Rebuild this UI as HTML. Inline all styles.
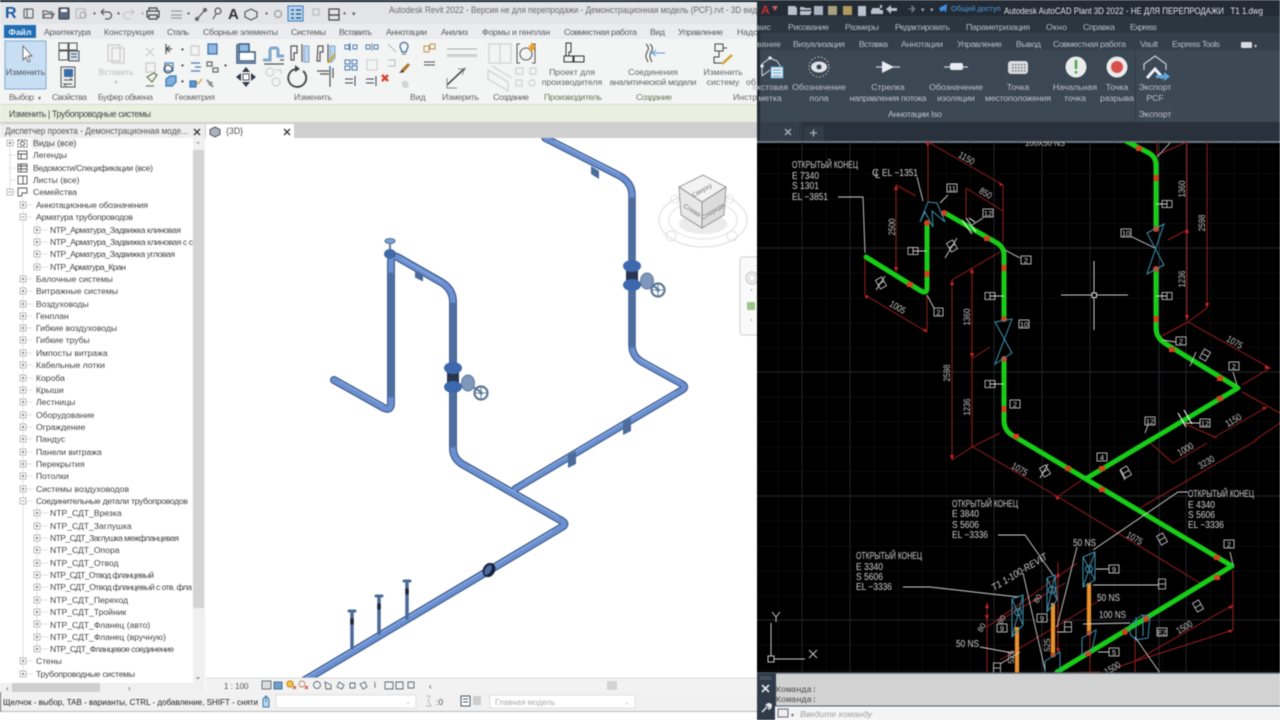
<!DOCTYPE html>
<html lang="ru"><head><meta charset="utf-8"><title>Revit и AutoCAD Plant 3D</title>
<style>
html,body{margin:0;padding:0;background:#fff;width:1280px;height:720px;overflow:hidden}
svg{display:block;filter:blur(.4px)}
text{font-family:"Liberation Sans",sans-serif;font-size:8.7px;fill:#555}
.t{fill:#444;font-size:8.6px}
.tab{fill:#5c5c5c;font-size:8.7px}
.lb{fill:#666;font-size:8.7px}
.d{fill:#b5bcc4;font-size:8.7px}
.r{fill:#bcc3cb;font-size:8.7px}
.c{fill:#cfcfcf;font-size:9.8px}
.m{text-anchor:middle}
.dim{fill:#c4c4c4;font-size:9.6px;text-anchor:middle}
.tg{fill:#ddd;font-size:7.5px;text-anchor:middle}
</style></head><body>
<svg width="1280" height="720" viewBox="0 0 1280 720" xmlns="http://www.w3.org/2000/svg">
<defs>
<clipPath id="cv"><rect x="206" y="138" width="551" height="541"/></clipPath>
<clipPath id="cd"><rect x="757" y="142" width="523" height="531"/></clipPath>
<pattern id="g1" width="24" height="24.8" patternUnits="userSpaceOnUse" x="10" y="25"><path d="M0 0H24M0 0V24.8" stroke="#131316" stroke-width="1" fill="none"/></pattern>
<g id="b"><rect x="-3.5" y="-5" width="7" height="10" fill="none" stroke="#d0d0d0" stroke-width=".8"/><path d="M-3.5 0H3.5" stroke="#d0d0d0" stroke-width=".8"/></g>
<g id="wh"><circle r="6.500" fill="none" stroke="#5a7596" stroke-width="2.200"/><path d="M-6.500 0H6.500M0-6.500V6.500" stroke="#6d88a8" stroke-width="1.100"/><circle r="1.800" fill="#5c7a9c"/></g>
<g id="pl"><rect x="-3" y="-3" width="6" height="6" fill="#fff" stroke="#aaa" stroke-width=".8"/><path d="M-1.500 0h3M0-1.500v3" stroke="#667" stroke-width=".7"/></g>
<g id="mi"><rect x="-3" y="-3" width="6" height="6" fill="#fff" stroke="#aaa" stroke-width=".8"/><path d="M-1.500 0h3" stroke="#667" stroke-width=".7"/></g>
</defs>

<!-- REVIT BACKGROUND -->
<rect x="0" y="0" width="757" height="720" fill="#fff"/>
<rect x="0" y="0" width="757" height="2" fill="#16202c"/>
<rect x="0" y="2" width="757" height="22" fill="#e2e4e8"/>
<rect x="0" y="24" width="757" height="16" fill="#eaecef"/>
<rect x="0" y="39" width="757" height="66" fill="#f3f4f4"/>
<rect x="0" y="104" width="757" height="1" fill="#d8dcd0"/>
<rect x="0" y="105" width="757" height="17" fill="#e9f0df"/>
<rect x="0" y="122" width="757" height="16" fill="#cfcfcf"/>
<rect x="0" y="124" width="205" height="14" fill="#eeeeee"/>
<rect x="206" y="124" width="88" height="15" fill="#fff"/>

<!-- QAT -->
<text x="5" y="18" style="font-size:16px;font-weight:bold;fill:#1c5a9e">R</text>
<g fill="none" stroke="#666" stroke-width="1.200">
<rect x="24" y="9" width="9" height="9" rx="1"/><path d="M27 9v9"/>
<path d="M43 18v-7h4l1 1h4v6zM43 18l2-4h9l-2 4"/>
<rect x="59" y="8" width="10" height="11" rx="1" fill="#5a6a80" stroke="#445"/><rect x="61" y="9" width="6" height="3" fill="#fff" stroke="none"/>
<rect x="76" y="9" width="9" height="9" stroke="#bbb"/><circle cx="83" cy="15" r="3" stroke="#aaa"/>
<path d="M101 12h7a3 3 0 0 1 0 7h-3M101 12l3-3M101 12l3 3" stroke="#555"/>
<path d="M134 12h-7a3 3 0 0 0 0 7h3M134 12l-3-3M134 12l-3 3" stroke="#c5c5c5"/>
<path d="M149 11v-3h8v3M149 17h-2v-6h12v6h-2M149 15h8v4h-8z" stroke="#444"/>
<path d="M171 11h11M171 15h11M171 18h11" stroke="#999"/>
<path d="M197 19l8-9" stroke="#555"/><circle cx="197" cy="19" r="1.500" fill="#777"/><circle cx="205" cy="10" r="1.500" fill="#777"/>
<circle cx="218" cy="11" r="3" stroke="#555"/><path d="M216 14l-3 5" stroke="#555"/>
<path d="M251 9l6 3v5l-6 3-6-3v-5z" stroke="#555"/><circle cx="278" cy="14" r="3.500" stroke="#999"/>
<rect x="313" y="9" width="6" height="6" stroke="#bbb"/><rect x="329" y="9" width="10" height="6" stroke="#444"/><rect x="329" y="15" width="10" height="5" stroke="#444"/>
</g>
<text x="228" y="19" style="font-size:15px;font-weight:bold;fill:#333">A</text>
<rect x="288" y="6" width="15" height="15" fill="#b9d4ee" stroke="#3c7cbc"/>
<path d="M291 10h3M296 10h5M291 14h3M296 14h5M291 18h3M296 18h5" stroke="#1a4a80" stroke-width="1.200"/>
<text x="93" y="16" class="tab">•</text><text x="117" y="16" class="tab">•</text><text x="141" y="16" class="tab" style="fill:#aaa">•</text><text x="187" y="16" class="tab">•</text><text x="265" y="16" class="tab">•</text><text x="343" y="16" class="tab">•</text><text x="352" y="16" class="tab" style="font-size:7px">▾</text>
<text x="389" y="13" textLength="368" lengthAdjust="spacingAndGlyphs" style="font-size:9.400px;fill:#6a6a6a">Autodesk Revit 2022 - Версия не для перепродажи - Демонстрационная модель (PCF).rvt - 3D вид</text>

<!-- TABS -->
<rect x="4" y="25" width="32" height="13" fill="#1f6db3"/>
<text x="20" y="35" class="m" style="fill:#eaf2fa;font-size:8.700px;font-weight:bold">Файл</text>
<text x="44" y="35" class="tab" textLength="47">Архитектура</text>
<text x="104" y="35" class="tab" textLength="50">Конструкция</text>
<text x="167" y="35" class="tab" textLength="22">Сталь</text>
<text x="203" y="35" class="tab" textLength="75">Сборные элементы</text>
<text x="291" y="35" class="tab" textLength="35">Системы</text>
<text x="339" y="35" class="tab" textLength="33">Вставить</text>
<text x="386" y="35" class="tab" textLength="41">Аннотации</text>
<text x="441" y="35" class="tab" textLength="27">Анализ</text>
<text x="482" y="35" class="tab" textLength="68">Формы и генплан</text>
<text x="564" y="35" class="tab" textLength="73">Совместная работа</text>
<text x="650" y="35" class="tab" textLength="15">Вид</text>
<text x="678" y="35" class="tab" textLength="45">Управление</text>
<text x="737" y="35" class="tab">Надстройки</text>

<!-- Ribbon icons -->
<rect x="5" y="41" width="41" height="48" fill="#c8dff3" stroke="#7fabd2"/>
<path d="M23 46v14l3-3 2 5 2-1-2-5h4z" fill="#fff" stroke="#666" stroke-width=".9"/>
<text x="25.500" y="75" class="m" style="font-size:8.700px;fill:#4a5560">Изменить</text>
<g fill="none" stroke="#555" stroke-width="1">
<rect x="59" y="43" width="9" height="7"/><rect x="69" y="43" width="8" height="7"/><rect x="59" y="51" width="9" height="9"/><rect x="69" y="51" width="10" height="10" fill="#cfe0f0"/><path d="M71 54h6M71 57h6"/>
<rect x="61" y="67" width="14" height="20" fill="#eee"/><rect x="64" y="69" width="9" height="8" fill="#3a6ea8" stroke="none"/><path d="M64 80h8l-2-2M72 84h-8l2 2"/>
</g>
<g fill="none" stroke="#d0d0d0" stroke-width="1.400">
<rect x="108" y="45" width="12" height="16"/><rect x="112" y="48" width="12" height="15"/>
<path d="M146 48l8 8M154 48l-8 8"/><rect x="146" y="63" width="9" height="9"/>
<rect x="191" y="46" width="8" height="9"/>
</g>
<text x="116" y="75" class="m" style="fill:#bbb;font-size:8.200px">Вставить</text><text x="116" y="84" class="m" style="fill:#bbb;font-size:6px">▾</text>
<g fill="none" stroke="#555" stroke-width="1.200">
<path d="M166 44v10M170 46l-4 3 4 3M166 49h6"/>
<path d="M147 77l5 5 5-7-3-2z" stroke="#6a7a50"/><path d="M146 86h8" stroke="#777"/>
<rect x="165" y="63" width="8" height="8" stroke="#3a7fc0"/><circle cx="168" cy="69" r="4" stroke="#555"/>
<path d="M166 86v-7l4-3h6v6l-4 4z" fill="#7fb0de" stroke="#3a75b0"/>
<path d="M191 63h9M195 67h6M191 71h9" stroke="#4a7cb0"/>
<path d="M190 87l5-6 3 3 4-5" stroke="#c6a030"/><rect x="190" y="81" width="6" height="6" fill="#5f96cf" stroke="#3a75b0"/>
<path d="M207 80l6 7M209 85l3-3" stroke="#888" stroke-width="2"/>
<path d="M207 62h5v4h-5zM213 68h5v4h-5z" stroke="#666"/>
<rect x="208" y="44" width="9" height="10" fill="#8fb7df" stroke="#3a6ea8"/>
</g>
<text x="181" y="52" class="t">•</text><text x="181" y="68" class="t">•</text><text x="181" y="84" class="t">•</text><text x="224" y="68" class="t">•</text>
<g fill="none" stroke="#3a5a80" stroke-width="1.500">
<path d="M237 44v19h19"/><rect x="239" y="44" width="10" height="8" fill="#8fbce6"/><rect x="239" y="52" width="16" height="9" fill="#fff"/>
<path d="M263 60h7v-10a2 2 0 0 1 2-2h4a2 2 0 0 1 2 2v6h6" stroke="#7fa8cc" stroke-width="3"/>
<path d="M264 64h20M280 60h4" stroke="#555" stroke-width="1.200"/>
<path d="M291 46h6v7h-3v7h-3zM302 44v18" stroke="#555" stroke-width="1.200"/><path d="M304 46h5v16h-5z" fill="#bcd4ee" stroke="#7faad0" stroke-width="1"/>
<path d="M318 46h5v6h-3v9h-3zM328 44v18" stroke="#555" stroke-width="1.200"/><path d="M330 46h5v12l-3 4h-2z" fill="#bcd4ee" stroke="#7faad0" stroke-width="1"/>
<path d="M328 63l7-9" stroke="#c9a530" stroke-width="2"/>
</g>
<g fill="#2e3c4e"><path d="M246 67l4 5h-8zM246 87l4-5h-8zM236 77l5-4v8zM256 77l-5-4v8z"/></g><rect x="243" y="74" width="6" height="6" fill="#fff" stroke="#555"/>
<g fill="none" stroke="#d0d0d0" stroke-width="1.200"><circle cx="270" cy="72" r="4"/><circle cx="276" cy="82" r="4"/><path d="M276 70h5v4"/></g>
<path d="M296 69a9 9 0 1 0 7 2" fill="none" stroke="#444" stroke-width="1.800"/><path d="M295 65l5 4-5 3z" fill="#444"/>
<path d="M317 71h12M320 74h9M330 71v16M333 68v10" fill="none" stroke="#555" stroke-width="1.200"/><path d="M330 66v5" stroke="#3a7fc0" stroke-width="1.500"/>
<g fill="none" stroke="#4a7cb0" stroke-width="1"><rect x="345" y="45" width="4" height="4"/><rect x="353" y="45" width="4" height="4"/><path d="M350 43v8"/><rect x="366" y="45" width="4" height="4"/><rect x="374" y="45" width="4" height="4"/><path d="M372 43v8" stroke="#888"/>
<rect x="345" y="60" width="5" height="4"/><rect x="352" y="60" width="5" height="4"/><rect x="345" y="66" width="5" height="4"/><rect x="352" y="66" width="5" height="4"/>
<rect x="367" y="60" width="10" height="10" stroke="#ccc"/><path d="M388 44l8 8M388 60h7v6h-7" stroke="#bbb"/>
<path d="M345 79h8M345 83h8M355 76v10" stroke="#445"/><path d="M366 79h8M366 83h8M376 76v10" stroke="#445"/></g>
<path d="M382 75l6 6M388 75l-6 6" stroke="#d8402e" stroke-width="2.400"/>
<g fill="none" stroke="#3b6b9e" stroke-width="1.200"><path d="M401 49a4 4 0 1 1 6 0l-1 3h-4z"/><path d="M402 54h4" stroke="#888"/></g>
<path d="M401 70l7-7 2 2-7 8z" fill="#a8792d"/><path d="M399 73l3-3 2 2z" fill="#333"/>
<rect x="402" y="81" width="6" height="7" rx="2" fill="#d4d4d4" transform="rotate(-30 405 84)"/>
<g fill="none" stroke="#999" stroke-width="1"><rect x="424" y="46" width="5" height="6" stroke="#c09050"/><rect x="430" y="44" width="5" height="5" stroke="#c09050"/></g>
<path d="M424 62h11M424 65h11" stroke="#555"/>
<path d="M447 49h30" stroke="#aaa"/><rect x="447" y="54" width="30" height="3" fill="#d0d0d0"/>
<path d="M447 85l18-17" stroke="#333" stroke-width="1.400"/><path d="M447 78v10h10M465 68l-3 7M458 69h8" stroke="#888" fill="none"/>
<g fill="none" stroke="#d6d6d6" stroke-width="1.400"><rect x="489" y="44" width="22" height="19"/><path d="M500 44v19"/><path d="M488 70l20 12v9l-20-12zM492 66l20 12"/><rect x="516" y="68" width="7" height="6"/><rect x="530" y="68" width="6" height="6"/><rect x="516" y="80" width="6" height="6"/><circle cx="532" cy="83" r="3"/></g>
<path d="M520 44h-3v19h3M532 44h3v19h-3" stroke="#555" fill="none"/><circle cx="526" cy="54" r="6" fill="none" stroke="#555"/><path d="M531 42l2 3 3 1-2 2 1 3-3-1-3 1 1-3-2-2 3-1z" fill="#f0a020"/>
<g fill="none" stroke="#333" stroke-width="1"><path d="M566 43h5v9h-2v4h-3zM564 56h9v6h-9z"/><rect x="574" y="56" width="10" height="6"/></g>
<g fill="none" stroke="#444" stroke-width="1"><path d="M646 44c3 3 3 5 1 8-2 4-1 6 1 10M650 44c3 3 3 5 1 8-2 4-1 6 1 10"/></g><path d="M652 53h13M656 50l-4 3 4 3" stroke="#5b9bd5" fill="none"/>
<g fill="none" stroke="#444" stroke-width="1"><rect x="715" y="44" width="8" height="7"/><path d="M719 51v6h-5v6h8M723 48h4"/><path d="M722 64l10-9" stroke="#c9a530" stroke-width="2.500"/></g>
<text x="572" y="75" class="lb m">Проект для</text><text x="572" y="85" class="lb m">производителя</text>
<text x="653" y="75" class="lb m">Соединения</text><text x="653" y="85" class="lb m" textLength="87">аналитической модели</text>
<text x="723" y="75" class="lb m">Изменить</text><text x="723" y="85" class="lb m">систему</text><text x="746" y="85" class="lb">об</text>
<text x="9" y="100" class="lb" textLength="25">Выбор</text><text x="38" y="100" class="lb" style="font-size:6px">▾</text>
<text x="52" y="100" class="lb" textLength="35">Свойства</text><text x="98" y="100" class="lb" textLength="55">Буфер обмена</text><text x="175" y="100" class="lb" textLength="40">Геометрия</text><text x="294" y="100" class="lb" textLength="38">Изменить</text><text x="410" y="100" class="lb">Вид</text><text x="442" y="100" class="lb" textLength="37">Измерить</text><text x="493" y="100" class="lb" textLength="36">Создание</text><text x="544" y="100" class="lb" textLength="58" style="fill:#6a7a55">Производитель</text><text x="636" y="100" class="lb" textLength="36" style="fill:#6a7a55">Создание</text><text x="733" y="100" class="lb">Инстр</text>
<text x="9" y="117" style="font-size:8.800px;fill:#444" textLength="142">Изменить | Трубопроводные системы</text>

<!-- Browser -->
<text x="5" y="134" textLength="183" lengthAdjust="spacingAndGlyphs" style="font-size:8.800px;fill:#555">Диспетчер проекта - Демонстрационная моде...</text>
<path d="M194 129l6 6M200 129l-6 6M284 129l6 6M290 129l-6 6" stroke="#333" stroke-width="1.300"/>
<path d="M215 127l5 2.500v5l-5 2.500-5-2.500v-5z" fill="#aab2bc" stroke="#556"/>
<text x="226" y="134" style="font-size:8.800px;fill:#555">{3D}</text>
<rect x="193" y="138" width="12" height="545" fill="#f0f0f0"/><rect x="193" y="150" width="11" height="458" fill="#d4d4d4"/>
<text x="198" y="147" class="m" style="font-size:7px;fill:#666">⌃</text>
<rect x="0" y="683" width="205" height="10" fill="#f0f0f0"/><rect x="12" y="683" width="88" height="10" fill="#cfcfcf"/>
<text x="6" y="691" style="font-size:8px;fill:#555">‹</text><text x="128" y="691" style="font-size:8px;fill:#555">›</text><text x="198" y="679" class="m" style="font-size:8px;fill:#555">⌄</text>
<path d="M10 148V192M10 192V196M23 198V674M37 222V267M37 506V650M10 143h6M10 155h6M10 168h6M10 180h6M10 192h6M23 205h10M23 217h10M23 279h10M23 291h10M23 304h10M23 316h10M23 328h10M23 340h10M23 353h10M23 365h10M23 378h10M23 390h10M23 402h10M23 415h10M23 427h10M23 439h10M23 452h10M23 464h10M23 476h10M23 489h10M23 501h10M23 661h10M23 674h10M37 230h11M37 242h11M37 254h11M37 267h11M37 513h11M37 526h11M37 538h11M37 550h11M37 563h11M37 575h11M37 587h11M37 600h11M37 612h11M37 624h11M37 637h11M37 649h11" stroke="#c4c4c4" stroke-dasharray="1 1" fill="none"/>
<use href="#pl" x="10" y="143"/><use href="#mi" x="10" y="192"/>
<use href="#pl" x="23" y="205"/><use href="#mi" x="23" y="217"/><use href="#pl" x="23" y="279"/><use href="#pl" x="23" y="291"/><use href="#pl" x="23" y="304"/><use href="#pl" x="23" y="316"/><use href="#pl" x="23" y="328"/><use href="#pl" x="23" y="340"/><use href="#pl" x="23" y="353"/><use href="#pl" x="23" y="365"/><use href="#pl" x="23" y="378"/><use href="#pl" x="23" y="390"/><use href="#pl" x="23" y="402"/><use href="#pl" x="23" y="415"/><use href="#pl" x="23" y="427"/><use href="#pl" x="23" y="439"/><use href="#pl" x="23" y="452"/><use href="#pl" x="23" y="464"/><use href="#pl" x="23" y="476"/><use href="#pl" x="23" y="489"/><use href="#mi" x="23" y="501"/><use href="#pl" x="23" y="661"/><use href="#pl" x="23" y="674"/>
<use href="#pl" x="37" y="230"/><use href="#pl" x="37" y="242"/><use href="#pl" x="37" y="254"/><use href="#pl" x="37" y="267"/><use href="#pl" x="37" y="513"/><use href="#pl" x="37" y="526"/><use href="#pl" x="37" y="538"/><use href="#pl" x="37" y="550"/><use href="#pl" x="37" y="563"/><use href="#pl" x="37" y="575"/><use href="#pl" x="37" y="587"/><use href="#pl" x="37" y="600"/><use href="#pl" x="37" y="612"/><use href="#pl" x="37" y="624"/><use href="#pl" x="37" y="637"/><use href="#pl" x="37" y="649"/>
<g fill="#fff" stroke="#555" stroke-width=".9"><rect x="18" y="140" width="9" height="7" stroke-dasharray="2 1"/><circle cx="22.500" cy="143.500" r="2"/><rect x="18" y="151" width="9" height="8"/><path d="M18 154h9M21 154v5"/><rect x="18" y="164" width="9" height="8"/><path d="M18 166h9M18 169h9M21 164v8"/><rect x="18" y="176" width="9" height="8"/><path d="M23 176v8"/><path d="M18 196v-8h9v5h-5v3z"/></g>
<rect x="31" y="138" width="45" height="11" fill="#f2f2f2"/><text x="33" y="146" class="t">Виды (все)</text>
<text x="33" y="158" class="t">Легенды</text>
<text x="33" y="171" class="t" textLength="120">Ведомости/Спецификации (все)</text>
<text x="33" y="183" class="t">Листы (все)</text>
<text x="33" y="195" class="t">Семейства</text>
<text x="36" y="208" class="t" textLength="112">Аннотационные обозначения</text>
<text x="36" y="220" class="t" textLength="97">Арматура трубопроводов</text>
<text x="50" y="233" class="t" textLength="131">NTP_Арматура_Задвижка клиновая</text>
<text x="50" y="245" class="t" textLength="143">NTP_Арматура_Задвижка клиновая с с</text>
<text x="50" y="257" class="t" textLength="125">NTP_Арматура_Задвижка угловая</text>
<text x="50" y="270" class="t" textLength="76">NTP_Арматура_Кран</text>
<text x="36" y="282" class="t">Балочные системы</text>
<text x="36" y="294" class="t">Витражные системы</text>
<text x="36" y="307" class="t">Воздуховоды</text>
<text x="36" y="319" class="t">Генплан</text>
<text x="36" y="331" class="t">Гибкие воздуховоды</text>
<text x="36" y="343" class="t">Гибкие трубы</text>
<text x="36" y="356" class="t">Импосты витража</text>
<text x="36" y="368" class="t">Кабельные лотки</text>
<text x="36" y="381" class="t">Короба</text>
<text x="36" y="393" class="t">Крыши</text>
<text x="36" y="405" class="t">Лестницы</text>
<text x="36" y="418" class="t">Оборудование</text>
<text x="36" y="430" class="t">Ограждение</text>
<text x="36" y="442" class="t">Пандус</text>
<text x="36" y="455" class="t">Панели витража</text>
<text x="36" y="467" class="t">Перекрытия</text>
<text x="36" y="479" class="t">Потолки</text>
<text x="36" y="492" class="t">Системы воздуховодов</text>
<text x="36" y="504" class="t" textLength="152">Соединительные детали трубопроводов</text>
<text x="50" y="516" class="t">NTP_СДТ_Врезка</text>
<text x="50" y="529" class="t">NTP_СДТ_Заглушка</text>
<text x="50" y="541" class="t" textLength="129">NTP_СДТ_Заглушка межфланцевая</text>
<text x="50" y="553" class="t">NTP_СДТ_Опора</text>
<text x="50" y="566" class="t">NTP_СДТ_Отвод</text>
<text x="50" y="578" class="t" textLength="104">NTP_СДТ_Отвод фланцевый</text>
<text x="50" y="590" class="t" textLength="142">NTP_СДТ_Отвод фланцевый с отв. фла</text>
<text x="50" y="603" class="t">NTP_СДТ_Переход</text>
<text x="50" y="615" class="t">NTP_СДТ_Тройник</text>
<text x="50" y="628" class="t">NTP_СДТ_Фланец (авто)</text>
<text x="50" y="640" class="t">NTP_СДТ_Фланец (вручную)</text>
<text x="50" y="652" class="t" textLength="124">NTP_СДТ_Фланцевое соединение</text>
<text x="36" y="664" class="t">Стены</text>
<text x="36" y="677" class="t" textLength="99">Трубопроводные системы</text>

<!-- 3D VIEW -->
<g clip-path="url(#cv)" fill="none" stroke-linecap="round" stroke-linejoin="round">
<g stroke="#445f8c" stroke-width="8">
<path d="M334 380L384 408Q391 411 391 403V262Q391 253 399 258L441 282Q453 289 453 302V448Q453 458 462 464L562 521Q567 524 562 527L295 686"/>
<path d="M515 489L682 390Q687 387 682 384L642 362Q632 356 632 345V195Q632 183 620 176L545 138" stroke-width="7.500"/>
</g>
<g stroke="#6a90d2" stroke-width="5.500">
<path d="M334 380L384 408Q391 411 391 403V262Q391 253 399 258L441 282Q453 289 453 302V448Q453 458 462 464L562 521Q567 524 562 527L295 686"/>
<path d="M515 489L682 390Q687 387 682 384L642 362Q632 356 632 345V195Q632 183 620 176L545 138" stroke-width="5"/>
</g>
<path d="M391 275V395M453 305V445M632 200V345" stroke="#4d6f9f" stroke-width="5.500"/>
<path d="M340 381L383 405M402 259L442 282M470 466.500L558 516.500M552 531L305 678M525 481L675 392M620 174L555 141M640 359L680 381" stroke="#8fb0e6" stroke-width="1"/>
<path d="M407 583V618M379 598V633M352 613V648" stroke="#4a6a98" stroke-width="3.500"/>
<path d="M404 581h6M376 596h6M349 611h6" stroke="#4a6a98" stroke-width="3"/>
<path d="M407 590v3M379 605v3M352 620v3" stroke="#223" stroke-width="3.500"/>
</g>
<ellipse cx="390" cy="241" rx="5" ry="2.500" fill="#7ea3d4" stroke="#4a6c9c"/><path d="M390 243v9" stroke="#5d7ca6" stroke-width="2"/>
<ellipse cx="390" cy="254" rx="6" ry="5" fill="#3f6aa8"/>
<path d="M415 270l8 4.500v7l-8-4z" fill="#4a6a98"/><path d="M591 166l8 5v8l-8-5zM568 455l8-4v13l-8 4zM623 422l8-4v13l-8 4z" fill="#4b6c9c"/>
<ellipse cx="489" cy="570" rx="6" ry="7.500" fill="#15223c" transform="rotate(30 489 570)"/><ellipse cx="488" cy="570" rx="3" ry="5.500" fill="#506aa0" transform="rotate(30 488 570)"/>
<!-- valves -->
<g transform="translate(453 377)"><rect x="-6" y="-7" width="12" height="14" fill="#2a3550"/><ellipse cx="15" cy="6" rx="6.500" ry="8" fill="#7f97ba" stroke="#5f7a9c"/><path d="M20 10l8 5" stroke="#5d7a9a" stroke-width="2"/><ellipse cx="0" cy="-9" rx="9" ry="6" fill="#3d68ae"/><ellipse cx="0" cy="10" rx="9" ry="6" fill="#3d68ae"/></g><use href="#wh" x="481" y="393"/>
<g transform="translate(632 275)"><rect x="-6" y="-7" width="12" height="14" fill="#2a3550"/><ellipse cx="15" cy="6" rx="6.500" ry="8" fill="#7f97ba" stroke="#5f7a9c"/><path d="M20 10l6 4" stroke="#5d7a9a" stroke-width="2"/><ellipse cx="0" cy="-9" rx="9" ry="6" fill="#3d68ae"/><ellipse cx="0" cy="10" rx="9" ry="6" fill="#3d68ae"/></g><use href="#wh" x="658" y="290"/>
<!-- viewcube -->
<g fill="none" stroke="#e2e2e2"><ellipse cx="703" cy="220" rx="44" ry="27" stroke-width="1.300"/><ellipse cx="703" cy="220" rx="34" ry="19" stroke-width="1"/><circle cx="671" cy="236" r="5"/><circle cx="732" cy="236" r="5"/><circle cx="675" cy="199" r="4"/><circle cx="730" cy="199" r="4"/></g>
<ellipse cx="703" cy="224" rx="24" ry="10" fill="#ebebeb"/>
<path d="M703 175l23 12-24 15-23-15z" fill="#f3f3f3" stroke="#888" stroke-width=".8"/><path d="M679 187l23 15v26l-21-13z" fill="#e8e8e8" stroke="#888" stroke-width=".8"/><path d="M726 187l-24 15v26l22-13z" fill="#dcdcdc" stroke="#888" stroke-width=".8"/>
<text x="0" y="0" transform="translate(703 192) rotate(-30)" class="m" style="font-size:6.500px;fill:#777">Сверху</text>
<text x="0" y="0" transform="translate(691 212) rotate(32)" class="m" style="font-size:6.500px;fill:#777">Слева</text>
<text x="0" y="0" transform="translate(714 213) rotate(-32)" class="m" style="font-size:6.500px;fill:#777">Спереди</text>
<rect x="740" y="257" width="20" height="78" rx="3" fill="#fafafa" stroke="#cfcfcf"/>
<circle cx="752" cy="278" r="6" fill="none" stroke="#bbb"/><circle cx="752" cy="278" r="3.500" fill="none" stroke="#ccc"/><rect x="747" y="302" width="8" height="8" fill="#9cc68a"/><path d="M751 290h1M751 320h1" stroke="#888" stroke-width="1.500"/>

<!-- view control -->
<rect x="206" y="678" width="551" height="14" fill="#f2f2f2"/><path d="M206 678H757" stroke="#ddd"/>
<text x="224" y="689" style="font-size:8px;fill:#555">1 : 100</text>
<g fill="none" stroke="#5c6670" stroke-width=".9"><rect x="262" y="681" width="9" height="8" fill="#ddd"/><rect x="274" y="682" width="8" height="7" fill="#6fa0c8" stroke="#3a6a90"/><circle cx="290" cy="684" r="3.200" fill="#f0c040" stroke="#c08820"/><path d="M293 686l3 3M296 686l-3 3" stroke="#d04020"/><circle cx="302" cy="684" r="3" stroke="#c08060"/><path d="M305 686l3 3M308 686l-3 3" stroke="#d04020"/><circle cx="317" cy="685" r="3.500"/><path d="M325 682l6 3v4h-5zM339 682l5 3-2 4-5-2zM350 683h5v5h-5zM360 684l5-2 2 5-4 2zM374 682h1M375 683v5M385 682h8v7h-8zM396 682h7v7h-7zM408 682h6v6h-6z"/></g>
<text x="429" y="689" style="font-size:8px;fill:#444">‹</text>
<rect x="607" y="681" width="10" height="9" fill="#d2d2d2"/>

<!-- status -->
<rect x="0" y="692" width="757" height="20" fill="#f1f1f1"/><path d="M0 711.500H757" stroke="#888" stroke-width=".6"/><path d="M.5 692V712" stroke="#666"/>
<text x="3" y="705" textLength="255" lengthAdjust="spacingAndGlyphs" style="font-size:8.500px;fill:#222">Щелчок - выбор, TAB - варианты, CTRL - добавление, SHIFT - сняти</text>
<path d="M263 707v-8l3-3 3 3v8zM266 697v5" fill="#bcd6ea" stroke="#3d7db0"/>
<rect x="276" y="695" width="140" height="13" fill="#fff" stroke="#e0e0e0"/><text x="408" y="704" class="m" style="font-size:6px;fill:#aaa">⌄</text>
<path d="M426 696h4l-2 5 3 5h-5" fill="none" stroke="#bbb"/><text x="436" y="705" style="font-size:8.500px;fill:#555">:0</text>
<rect x="461" y="696" width="9" height="10" fill="#fff" stroke="#456"/><path d="M463 699h5M463 702h5" stroke="#456"/>
<rect x="473" y="696" width="8" height="9" fill="#ccc"/>
<rect x="490" y="695" width="145" height="13" fill="#fff" stroke="#e0e0e0"/><text x="495" y="705" style="font-size:8px;fill:#aaa">Главная модель</text><text x="627" y="704" class="m" style="font-size:6px;fill:#aaa">⌄</text>

<!-- AUTOCAD -->
<rect x="757" y="0" width="523" height="720" fill="#000"/>
<rect x="757" y="0" width="523" height="16" fill="#232b35"/>
<rect x="757" y="16" width="523" height="17" fill="#2c3641"/>
<rect x="757" y="33" width="523" height="17" fill="#343f4b"/>
<rect x="757" y="50" width="523" height="72" fill="#3c4754"/>
<rect x="757" y="122" width="523" height="19" fill="#29323c"/>
<rect x="757" y="122" width="45" height="19" fill="#343e4a"/>
<path d="M800 122V141" stroke="#29323c"/><rect x="804" y="126" width="20" height="15" fill="#323c47"/>
<rect x="757" y="141" width="523" height="2" fill="#6c7683"/>
<rect x="757" y="0" width="3" height="141" fill="#222a33"/>
<rect x="1135" y="50" width="1" height="72" fill="#2f3944"/>
<rect x="1136" y="50" width="144" height="72" fill="#3d4855"/>

<text x="761" y="14" style="font-size:12px;font-weight:bold;fill:#c8302c">A</text><path d="M772 6h6l-3 5z" fill="#c8605a"/>
<g fill="#b8c2cc"><path d="M788 6h7l2 2v7h-9z"/><path d="M800 7h4l1 1h6v2h-11zM800 11h12l-2 4h-10z"/><rect x="814" y="6" width="9" height="9" fill="#aab4c0"/><rect x="828" y="6" width="9" height="9" fill="#a8a080"/><rect x="843" y="6" width="9" height="9" fill="#b09a60"/><rect x="858" y="6" width="8" height="10"/><path d="M872 8h8v-3h2v3h-2v2h-8zM871 10h12v4h-12z"/><path d="M886 9l5-4v3h6v3h-6v3z"/></g>
<path d="M908 9h6M915 9l-3-3v6z" stroke="#6a7480" fill="#6a7480"/><text x="921" y="12" style="font-size:7px;fill:#aaa">▾</text>
<text x="930" y="12" style="font-size:7px;fill:#aaa">▾</text>
<path d="M939 8l8-4-1 9-2-3-3 2z" fill="#3d8fe0"/>
<text x="951" y="11" style="font-size:7.400px;fill:#4f9de0">Общий доступ</text>
<text x="1004" y="14" textLength="259" lengthAdjust="spacingAndGlyphs" style="font-size:9.400px;fill:#e0e4e8">Autodesk AutoCAD Plant 3D 2022 - НЕ ДЛЯ ПЕРЕПРОДАЖИ&#160;&#160;&#160;T1 1.dwg</text>

<text x="757" y="30" class="d">вис</text><text x="788" y="30" class="d" textLength="41">Рисование</text><text x="845" y="30" class="d" textLength="34">Размеры</text><text x="895" y="30" class="d" textLength="55">Редактировать</text><text x="966" y="30" class="d" textLength="64">Параметризация</text><text x="1046" y="30" class="d" textLength="21">Окно</text><text x="1083" y="30" class="d" textLength="32">Справка</text><text x="1130" y="30" class="d" textLength="27">Express</text>
<text x="757" y="47" class="d">вание</text><text x="793" y="47" class="d" textLength="52">Визуализация</text><text x="859" y="47" class="d" textLength="29">Вставка</text><text x="901" y="47" class="d" textLength="42">Аннотации</text><text x="957" y="47" class="d" textLength="45">Управление</text><text x="1016" y="47" class="d" textLength="25">Вывод</text><text x="1053" y="47" class="d" textLength="73">Совместная работа</text><text x="1140" y="47" class="d" textLength="18">Vault</text><text x="1172" y="47" class="d" textLength="48">Express Tools</text>
<rect x="1241" y="42" width="11" height="6" rx="1" fill="#d8dce0"/><text x="1254" y="48" style="font-size:6px;fill:#ccc">▾</text>

<!-- CAD ribbon icons -->
<g fill="none" stroke="#d4dae0" stroke-width="1"><path d="M762 76V64l8-6 7 3 4 6M762 76l8-6"/><circle cx="770" cy="58" r="1.300" fill="#fff"/><circle cx="762" cy="66" r="1.300" fill="#fff"/></g><rect x="771" y="67" width="12" height="11" fill="#e8eef2" stroke="#5b9fd0"/><path d="M773 70h8M773 73h8M773 76h8" stroke="#5b9fd0"/>
<ellipse cx="819" cy="67" rx="8" ry="5.500" fill="#e0e4e8"/><circle cx="819" cy="67" r="2.500" fill="#3c4754"/><circle cx="819" cy="67" r="10" fill="none" stroke="#c8cdd3" stroke-dasharray="1.500 2"/>
<path d="M876 67h24" stroke="#ccd" stroke-width="1.200"/><path d="M882 61l12 6-12 6z" fill="#e8ecf0"/>
<path d="M944 67h24" stroke="#ccd" stroke-width="1.200"/><rect x="950" y="63" width="13" height="7" rx="2" fill="#e8ecf0"/>
<rect x="1008" y="61" width="20" height="13" rx="3" fill="#d8dce0"/><g fill="#777"><rect x="1012" y="64" width="1.500" height="1.500"/><rect x="1015" y="64" width="1.500" height="1.500"/><rect x="1018" y="64" width="1.500" height="1.500"/><rect x="1021" y="64" width="1.500" height="1.500"/><rect x="1024" y="64" width="1.500" height="1.500"/><rect x="1012" y="67" width="1.500" height="1.500"/><rect x="1015" y="67" width="1.500" height="1.500"/><rect x="1018" y="67" width="1.500" height="1.500"/><rect x="1021" y="67" width="1.500" height="1.500"/><rect x="1024" y="67" width="1.500" height="1.500"/><rect x="1012" y="70" width="1.500" height="1.500"/><rect x="1015" y="70" width="1.500" height="1.500"/><rect x="1018" y="70" width="1.500" height="1.500"/><rect x="1021" y="70" width="1.500" height="1.500"/><rect x="1024" y="70" width="1.500" height="1.500"/></g>
<circle cx="1076" cy="67" r="10.500" fill="#e9ecea"/><rect x="1074.800" y="60" width="2.400" height="9" fill="#4fa050"/><rect x="1074.800" y="71" width="2.400" height="2.400" fill="#4fa050"/>
<circle cx="1117" cy="67" r="10.500" fill="#e9ecea"/><circle cx="1117" cy="67" r="6" fill="#d85048"/>
<path d="M1144 70V64l11-8 11 8v6" fill="none" stroke="#cdd3d9" stroke-width="1.200"/><path d="M1147 78l8-9 8 9" fill="none" stroke="#eef" stroke-width="3"/><path d="M1156 75h8v-3l6 4.500-6 4.500v-3h-8z" fill="#5ba8e0"/>
<text x="770" y="90" class="r m">екстовая</text><text x="770" y="101" class="r m">метка</text>
<text x="819" y="90" class="r m">Обозначение</text><text x="819" y="101" class="r m">пола</text>
<text x="888" y="90" class="r m">Стрелка</text><text x="888" y="101" class="r m" textLength="77">направления потока</text>
<text x="956" y="90" class="r m">Обозначение</text><text x="956" y="101" class="r m">изоляции</text>
<text x="1018" y="90" class="r m">Точка</text><text x="1018" y="101" class="r m" textLength="66">местоположения</text>
<text x="1075" y="90" class="r m">Начальная</text><text x="1075" y="101" class="r m">точка</text>
<text x="1117" y="90" class="r m">Точка</text><text x="1117" y="101" class="r m">разрыва</text>
<text x="1155" y="90" class="r m">Экспорт</text><text x="1155" y="101" class="r m">PCF</text>
<text x="915" y="117" class="r m" textLength="54">Аннотации Iso</text><text x="1155" y="117" class="r m">Экспорт</text>
<path d="M785 129l6 6M791 129l-6 6" stroke="#aab2ba" stroke-width="1.400"/><path d="M810 133h7M813.500 129.500v7" stroke="#aab2ba" stroke-width="1.300"/>

<!-- CAD DRAWING -->
<g clip-path="url(#cd)">
<rect x="757" y="142" width="523" height="531" fill="url(#g1)"/>
<path d="M757 248H1280M757 372H1280M757 496H1280M757 620H1280M802 142V673M850 142V673M994 142V673M1042 142V673M1090 142V673M1186 142V673" stroke="#24242a" fill="none"/><path d="M1159 142V673" stroke="#2a2d33"/>
<text x="1045" y="146" class="dim" textLength="40" lengthAdjust="spacingAndGlyphs">100X50 NS</text>

<!-- dims -->
<g fill="none" stroke="#961d1a" stroke-width="1">
<path d="M928 142L1003 185V243M928 142V202M966 188L1003 211M966 188V218M896 185V272M896 185L916 196M865 257V295L927 332M927 295V332M952 280V460M952 280L1000 252M972 268V447M973 358L990 347M1000 433L972 447L952 460M973 447L1060 498L1200 583M1057 497L1082 480"/>
<path d="M1157 140V155L1187 142M1187 142V320M1207 142V308L1188 322M1160 337L1188 322L1270 368L1242 385M1168 240L1187 230M1242 392L1280 413M1267 407L1213 438M1280 423L1255 440M1183 423L1217 438M1140 508L1257 440M1173 463L1207 443M1173 463L1147 440"/>
<path d="M1233 570V630M1233 605L1135 661M1233 630L1117 667M1135 640V673M987 603V672M987 627L1077 563M1000 620L1065 583M1058 562V653M1000 660L1100 600M1100 672L1050 673M1090 634V673"/>
</g>
<g fill="#d02520"><path d="M926 142l4 2-3 2zM1003 185l-4-3 1 4zM896 185l2 5h-4zM896 272l2-5h-4zM865 295l4 1-3 3zM927 332l-4-1 2-3zM952 280l2 5h-4zM972 268l2 5h-4zM972 358l2-5 -4 0zM1187 228l2 5h-4zM1187 320l2-5h-4zM1207 308l2-5h-4zM1270 368l-5-3v4zM1267 407l-5 0 2 3zM1233 605l-5 2 3 2zM1233 630l-5 0 2 3zM987 620l2-5h-4zM987 603l2 5h-4zM1058 572l2 5h-4zM1058 653l2-5h-4zM1060 498l-5-2 2 4zM952 460l2-5h-4z"/></g>

<!-- green pipes -->
<g fill="none" stroke="#18cc18" stroke-width="5" stroke-linejoin="round" stroke-linecap="round">
<path d="M866 257L921 291Q927 294 927 288V225"/>
<path d="M945 213L997 243Q1004 247 1004 255V319"/>
<path d="M1004 360V420Q1004 430 1012 435L1232 566L1057 672"/>
<path d="M1087 478L1238 388L1166 344Q1156 338 1156 328V270"/>
<path d="M1156 228V165Q1156 157 1149 153L1126 141"/>
</g>
<!-- joints -->
<g fill="#d0431c"><rect x="907" y="282" width="6" height="5"/><rect x="924.500" y="271" width="5" height="6"/><circle cx="927" cy="223" r="3"/><circle cx="944" cy="213" r="3"/><rect x="984" y="236" width="6" height="5"/><rect x="1001.500" y="265" width="5" height="6"/><circle cx="1004" cy="319" r="3"/><circle cx="1004" cy="359" r="3"/><rect x="1001.500" y="406" width="5" height="6"/><rect x="1136" y="146" width="6" height="5"/><rect x="1153.500" y="175" width="5" height="6"/><circle cx="1156" cy="229" r="3"/><circle cx="1156" cy="269" r="3"/><rect x="1153.500" y="316" width="5" height="6"/><rect x="1169" y="347" width="6" height="5"/><rect x="1217" y="376" width="6" height="5"/><rect x="1217" y="396" width="6" height="5"/><rect x="1065" y="466" width="6" height="5"/><rect x="1099" y="466" width="6" height="5"/><rect x="1099" y="487" width="6" height="5"/><rect x="1214" y="555" width="6" height="5"/><rect x="1214" y="575" width="6" height="5"/><circle cx="1146" cy="619" r="3"/><circle cx="1125" cy="632" r="3"/><rect x="1085" y="651" width="6" height="5"/><rect x="1013" y="434" width="6" height="5"/></g>

<!-- orange -->
<path d="M1017 627V673M1053 603V657M1089 583V633" stroke="#ec922c" stroke-width="4.200" fill="none"/>
<circle cx="1089" cy="633" r="2.500" fill="#d0431c"/><circle cx="1053" cy="655" r="2.500" fill="#d0431c"/>

<!-- blue valves -->
<g fill="none" stroke="#3c93b0" stroke-width="1">
<path d="M920 222L928 202L937 203L945 222L932 211L933 227L925 212Z"/>
<path d="M995 322L1012 319L995 364L1012 353Z"/>
<path d="M1147 233L1164 224L1147 274L1164 265Z"/>
<path d="M1083 557L1095 552L1095 580L1083 587ZM1083 557L1095 580M1095 552L1083 587"/><circle cx="1089" cy="569" r="3.500"/>
<path d="M1047 578L1055 575L1057 600L1047 612ZM1047 578L1057 600M1055 575L1047 612"/><circle cx="1052" cy="590" r="3.500"/>
<path d="M1012 599L1023 595L1023 625L1012 637ZM1012 599L1023 625M1023 595L1012 637"/><circle cx="1018" cy="612" r="3.500"/>
<path d="M1130 625L1142 615L1150 616L1148 638L1136 640L1130 634ZM1136 617V640M1143 615V636"/>
<path d="M1082 638V655L1092 650L1096 631V630L1089 634Z"/>
<path d="M1045 661L1045 673M1045 661L1060 652V673"/>
</g>

<!-- white leaders -->
<g fill="none" stroke="#d0d0d0" stroke-width=".9">
<path d="M838 197H863L865 253M917 177L923 201M940 203L948 195M972 225L983 218M927 295L934 308M1005 250L1020 258"/>
<path d="M1130 236L1155 248M1162 340L1176 342M1233 372L1237 385M1185 423L1200 423M1145 433L1148 425M1157 157L1170 143"/>
<path d="M998 535H1025L1053 575M903 587H930L1018 597M1188 492H1178L1093 550M1077 547L1057 627M1023 573L1045 670M1135 637L1160 673M1093 585H1158M1083 624L1130 623M980 647L1013 653M1230 552L1233 565"/>
<path d="M913 251H927M990 296H1004M990 384H1004M1156 204H1167M1156 296H1167"/>
<path d="M1096 569H1109M1098 652H1109M1057 632H1065M957 238L945 258M1196 352L1190 366M1048 464L1040 478M1120 470L1125 480"/>
<path d="M1000 664L1020 652M876 290L885 276"/>
</g>
<!-- split boxes -->
<use href="#b" x="913" y="251" transform="rotate(90 913 251)"/><use href="#b" x="990" y="296" transform="rotate(90 990 296)"/><use href="#b" x="990" y="384" transform="rotate(90 990 384)"/><use href="#b" x="1167" y="204" transform="rotate(90 1167 204)"/><use href="#b" x="1167" y="296" transform="rotate(90 1167 296)"/>
<use href="#b" x="881" y="283" transform="rotate(-30 881 283)"/><use href="#b" x="952" y="246" transform="rotate(-30 952 246)"/><use href="#b" x="1205" y="355" transform="rotate(30 1205 355)"/><use href="#b" x="1045" y="471" transform="rotate(-30 1045 471)"/><use href="#b" x="1126" y="472" transform="rotate(-30 1126 472)"/><use href="#b" x="1162" y="539" transform="rotate(-30 1162 539)"/><use href="#b" x="1198" y="606" transform="rotate(-30 1198 606)"/><use href="#b" x="1162" y="584"/><use href="#b" x="1068" y="627"/><use href="#b" x="997" y="668"/>
<!-- gate marks -->
<path d="M962 220l10 14M966 218l10 14M969 218l6 4M1178 413l8 14M1184 410l8 14" stroke="#fff" stroke-width="1" fill="none"/>
<!-- tags -->
<g fill="#000" stroke="#ddd" stroke-width=".8"><rect x="947" y="184" width="10" height="8"/><rect x="983" y="209" width="10" height="8"/><rect x="934" y="308" width="9" height="8"/><rect x="1121" y="229" width="10" height="8"/><rect x="1176" y="337" width="10" height="8"/><rect x="1229" y="362" width="10" height="8"/><rect x="1145" y="417" width="10" height="8"/><rect x="1200" y="419" width="10" height="8"/><rect x="1097" y="453" width="10" height="8"/><rect x="1224" y="540" width="10" height="8"/><rect x="1109" y="565" width="10" height="8"/><rect x="1037" y="614" width="10" height="8"/><rect x="997" y="624" width="10" height="8"/><rect x="1109" y="648" width="10" height="8"/><rect x="1157" y="628" width="10" height="8"/><rect x="1021" y="256" width="10" height="8"/><rect x="1019" y="320" width="10" height="8"/><rect x="1010" y="400" width="10" height="8"/></g>
<text x="952" y="191" class="tg">11</text><text x="988" y="216" class="tg">12</text><text x="938.500" y="315" class="tg">2</text><text x="1126" y="236" class="tg">10</text><text x="1181" y="344" class="tg">2</text><text x="1234" y="369" class="tg">2</text><text x="1150" y="424" class="tg">12</text><text x="1205" y="426" class="tg">12</text><text x="1102" y="460" class="tg">4</text><text x="1229" y="547" class="tg">2</text><text x="1114" y="572" class="tg">9</text><text x="1042" y="621" class="tg">9</text><text x="1002" y="631" class="tg">9</text><text x="1114" y="655" class="tg">5</text><text x="1162" y="635" class="tg">E2</text><text x="1026" y="263" class="tg">2</text><text x="1024" y="327" class="tg">10</text><text x="1015" y="407" class="tg">2</text>
<!-- text blocks -->
<text x="792" y="168" class="c" textLength="66" lengthAdjust="spacingAndGlyphs">ОТКРЫТЫЙ КОНЕЦ</text><text x="792" y="179" class="c" textLength="27" lengthAdjust="spacingAndGlyphs">E 7340</text><text x="792" y="189" class="c" textLength="27" lengthAdjust="spacingAndGlyphs">S 1301</text><text x="792" y="200" class="c" textLength="36" lengthAdjust="spacingAndGlyphs">EL −3851</text>
<text x="872" y="176" class="c">C</text><text x="875" y="178" class="c">L</text><text x="882" y="176" class="c" textLength="36" lengthAdjust="spacingAndGlyphs">EL −1351</text>
<text x="952" y="507" class="c" textLength="66" lengthAdjust="spacingAndGlyphs">ОТКРЫТЫЙ КОНЕЦ</text><text x="952" y="517" class="c" textLength="27" lengthAdjust="spacingAndGlyphs">E 3840</text><text x="952" y="528" class="c" textLength="27" lengthAdjust="spacingAndGlyphs">S 5606</text><text x="952" y="538" class="c" textLength="36" lengthAdjust="spacingAndGlyphs">EL −3336</text>
<text x="856" y="559" class="c" textLength="66" lengthAdjust="spacingAndGlyphs">ОТКРЫТЫЙ КОНЕЦ</text><text x="856" y="570" class="c" textLength="27" lengthAdjust="spacingAndGlyphs">E 3340</text><text x="856" y="580" class="c" textLength="27" lengthAdjust="spacingAndGlyphs">S 5606</text><text x="856" y="590" class="c" textLength="36" lengthAdjust="spacingAndGlyphs">EL −3336</text>
<text x="1188" y="497" class="c" textLength="66" lengthAdjust="spacingAndGlyphs">ОТКРЫТЫЙ КОНЕЦ</text><text x="1188" y="508" class="c" textLength="27" lengthAdjust="spacingAndGlyphs">E 4340</text><text x="1188" y="518" class="c" textLength="27" lengthAdjust="spacingAndGlyphs">S 5606</text><text x="1188" y="528" class="c" textLength="36" lengthAdjust="spacingAndGlyphs">EL −3336</text>
<text x="1073" y="546" class="c" textLength="23" lengthAdjust="spacingAndGlyphs">50 NS</text><text x="1097" y="601" class="c" textLength="23" lengthAdjust="spacingAndGlyphs">50 NS</text><text x="1099" y="618" class="c" textLength="27" lengthAdjust="spacingAndGlyphs">100 NS</text><text x="956" y="647" class="c" textLength="23" lengthAdjust="spacingAndGlyphs">50 NS</text>
<text x="0" y="0" transform="translate(994 591) rotate(-31)" class="c" textLength="63" lengthAdjust="spacingAndGlyphs" style="font-style:italic">T1 1-100-REVIT</text>
<!-- dim numbers -->
<text class="dim" textLength="17" lengthAdjust="spacingAndGlyphs" transform="translate(965 161) rotate(30)">1150</text><text class="dim" textLength="13" lengthAdjust="spacingAndGlyphs" transform="translate(984 196) rotate(30)">850</text><text class="dim" textLength="17" lengthAdjust="spacingAndGlyphs" transform="translate(895 227) rotate(-90)">2500</text><text class="dim" textLength="17" lengthAdjust="spacingAndGlyphs" transform="translate(896 310) rotate(30)">1005</text><text class="dim" textLength="17" lengthAdjust="spacingAndGlyphs" transform="translate(970 317) rotate(-90)">1360</text><text class="dim" textLength="17" lengthAdjust="spacingAndGlyphs" transform="translate(950 373) rotate(-90)">2598</text><text class="dim" textLength="17" lengthAdjust="spacingAndGlyphs" transform="translate(970 407) rotate(-90)">1236</text>
<text class="dim" textLength="17" lengthAdjust="spacingAndGlyphs" transform="translate(1185 189) rotate(-90)">1360</text><text class="dim" textLength="17" lengthAdjust="spacingAndGlyphs" transform="translate(1205 223) rotate(-90)">2598</text><text class="dim" textLength="17" lengthAdjust="spacingAndGlyphs" transform="translate(1185 279) rotate(-90)">1236</text><text class="dim" textLength="17" lengthAdjust="spacingAndGlyphs" transform="translate(1233 345) rotate(30)">1075</text><text class="dim" textLength="17" lengthAdjust="spacingAndGlyphs" transform="translate(1235 423) rotate(-30)">1150</text>
<text class="dim" textLength="17" lengthAdjust="spacingAndGlyphs" transform="translate(1018 472) rotate(30)">1075</text><text class="dim" textLength="17" lengthAdjust="spacingAndGlyphs" transform="translate(1187 452) rotate(-30)">1000</text><text class="dim" textLength="17" lengthAdjust="spacingAndGlyphs" transform="translate(1208 465) rotate(-30)">3230</text><text class="dim" textLength="17" lengthAdjust="spacingAndGlyphs" transform="translate(1133 541) rotate(30)">1075</text><text class="dim" textLength="17" lengthAdjust="spacingAndGlyphs" transform="translate(1186 630) rotate(-30)">1500</text><text class="dim" textLength="17" lengthAdjust="spacingAndGlyphs" transform="translate(1114 671) rotate(-30)">1500</text>
<text class="dim" transform="translate(984 629) rotate(-60)" style="font-size:8px">80</text><text class="dim" transform="translate(1004 621) rotate(-60)" style="font-size:8px">80</text><text class="dim" transform="translate(1040 600) rotate(-60)" style="font-size:8px">80</text><text class="dim" transform="translate(1050 645) rotate(-90)" style="font-size:8px">525</text><text class="dim" transform="translate(1014 657) rotate(-90)" style="font-size:8px">525</text>
<!-- crosshair -->
<path d="M1061 295H1128M1094 261V330" stroke="#c8c8c8" fill="none"/><rect x="1092" y="293" width="4.500" height="4.500" fill="#000" stroke="#ddd"/>
<!-- UCS -->
<path d="M771 623V656M774 659H805" stroke="#c8c8c8" fill="none" stroke-width="1"/><rect x="768" y="656" width="6" height="6" fill="none" stroke="#c8c8c8"/>
<path d="M772 612l4 5 4-5M776 617v5M809 650l8 8M817 650l-8 8" stroke="#c8c8c8" fill="none"/>
</g>

<!-- command -->
<rect x="757" y="673" width="523" height="33" fill="#d2d2d2"/>
<path d="M757 673H1280" stroke="#5a6570" stroke-width="1.500"/>
<rect x="757" y="673" width="19" height="47" fill="#2f3b48"/>
<rect x="775" y="706" width="505" height="14" fill="#f4f4f4"/><path d="M775 706H1280" stroke="#4a5560"/>
<path d="M760 677h12M760 679h12" stroke="#7f8a96" stroke-dasharray="1 1"/>
<path d="M762 685l7 7M769 685l-7 7" stroke="#e8ecf0" stroke-width="1.600"/>
<path d="M762 712l5-5M766 706a3 3 0 0 1 4-2l-2 2 1 1 2-2a3 3 0 0 1-3 4" fill="none" stroke="#e8ecf0" stroke-width="1.500"/>
<text x="776" y="692" style="font-family:'Liberation Mono',monospace;font-size:8.500px;fill:#444">Команда:</text>
<text x="776" y="702" style="font-family:'Liberation Mono',monospace;font-size:8.500px;fill:#444">Команда:</text>
<rect x="778" y="709" width="10" height="8" fill="#eee" stroke="#667"/><text x="791" y="717" style="font-size:6px;fill:#667">▾</text>
<text x="800" y="717" style="font-size:8.500px;font-style:italic;fill:#a0a0a0" textLength="72">Введите команду</text>
</svg>
</body></html>
